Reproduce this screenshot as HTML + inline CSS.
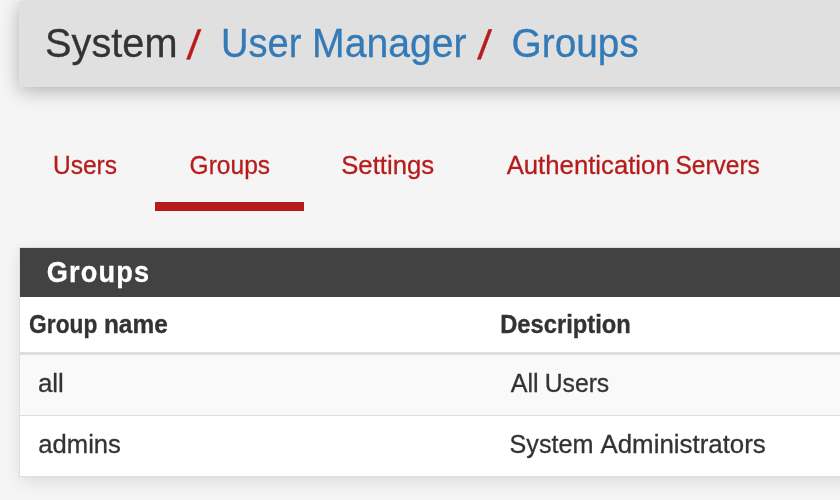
<!DOCTYPE html>
<html lang="en">
<head>
<meta charset="utf-8">
<title>System / User Manager / Groups</title>
<style>
html,body{margin:0;padding:0;}
body{width:840px;height:500px;overflow:hidden;background:#f5f5f5;position:relative;
  font-family:"Liberation Sans",sans-serif;color:#333;}
#root{position:absolute;left:0;top:0;width:840px;height:500px;overflow:hidden;will-change:transform;}
.abs{position:absolute;}
.g{position:absolute;left:0;top:0;margin:0;font-weight:normal;}
.th.g{font-weight:bold;}
.t{position:absolute;white-space:nowrap;line-height:1;margin:0;padding:0;transform-origin:0 84.65%;}
.h1{-webkit-text-stroke:0.3px;}
.tab,.td{-webkit-text-stroke:0.3px;}
a{text-decoration:none;color:inherit;}
/* header */
#hdr{left:19px;top:1px;width:900px;height:86px;background:#e0e0e0;
  box-shadow:0 4px 18px 0 rgba(0,0,0,.28);}
.h1{font-size:40px;font-weight:normal;}
.red{color:#b71c1c;}
.blue{color:#337ab7;}
/* tabs */
.tab{font-size:26px;color:#b71c1c;font-weight:normal;}
#ul{left:155px;top:202px;width:149px;height:9px;background:#b71c1c;}
/* panel */
#panel{left:20px;top:248px;width:840px;height:228px;background:#fff;
  box-shadow:0 0 0 1px #dfdfdf,0 5px 16px 0 rgba(0,0,0,.11);}
#ph{left:0;top:0;width:840px;height:49px;background:#424242;}
#thb{left:0;top:104px;width:840px;height:3px;background:#ddd;}
#r1{left:0;top:107px;width:840px;height:60px;background:#f9f9f9;}
#rb{left:0;top:166.5px;width:840px;height:1.5px;background:#ddd;}
.pt{font-size:28px;font-weight:bold;color:#fff;letter-spacing:1.2px;-webkit-text-stroke:0.3px;}
.th{font-size:26px;font-weight:bold;color:#333;-webkit-text-stroke:0.35px;}
.td{font-size:26px;color:#333;font-weight:normal;}
</style>
</head>
<body>
<div id="root">
<header id="hdr" class="abs"></header>
<h1 class="t h1" id="b1" style="left:45px;top:23px;transform:translate(0.12px,0px) scale(0.9925,1.03);">System</h1>
<span class="t h1 red" id="s1" style="left:189px;top:24px;transform:translate(0.58px,0px) skewX(-5deg) scale(1.0914,1.03);transform-origin:0 0;">/</span>
<a class="g h1 blue"><span class="t" id="b2a" style="left:220px;top:23px;transform:translate(0.96px,0px) scale(0.9533,1.03);">User</span> <span class="t" id="b2b" style="left:312px;top:23px;transform:translate(0.06px,0px) scale(0.9787,1.03);">Manager</span></a>
<span class="t h1 red" id="s2" style="left:480px;top:24px;transform:translate(0.3px,0px) skewX(-5deg) scale(1.0958,1.03);transform-origin:0 0;">/</span>
<a class="t h1 blue" id="b3" style="left:511px;top:23px;transform:translate(0.58px,0px) scale(0.9688,1.03);">Groups</a>

<nav>
<a class="t tab" id="t1" style="left:52px;top:152px;transform:translate(0.95px,0px) scale(0.9435,1);">Users</a>
<a class="t tab" id="t2" style="left:189px;top:152px;transform:translate(0.59px,0px) scale(0.9436,1);">Groups</a>
<a class="t tab" id="t3" style="left:341px;top:152px;transform:translate(0.18px,0px) scale(0.9893,1);">Settings</a>
<a class="g tab"><span class="t" id="t4a" style="left:506px;top:152px;transform:translate(0.66px,0px) scale(0.9893,1);">Authentication</span> <span class="t" id="t4b" style="left:675px;top:152px;transform:translate(0.46px,0px) scale(0.942,1);">Servers</span></a>
<div id="ul" class="abs"></div>
</nav>

<section id="panel" class="abs">
  <div id="ph" class="abs"></div>
  <h2 class="t pt" id="p1" style="left:26px;top:10px;transform:translate(0.87px,0.6px) scale(0.9676,1.06);">Groups</h2>
  <div class="g th"><span class="t" id="h1a" style="left:9px;top:63px;transform:translate(0.11px,0px) scale(0.8744,1);">Group</span> <span class="t" id="h1b" style="left:83px;top:63px;transform:translate(0.9px,0px) scale(0.9397,1);">name</span></div>
  <div class="t th" id="h2" style="left:480px;top:63px;transform:translate(0.21px,0px) scale(0.9128,1);">Description</div>
  <div id="thb" class="abs"></div>
  <div id="r1" class="abs"></div>
  <div id="rb" class="abs"></div>
  <div class="t td" id="c1" style="left:17px;top:122px;transform:translate(0.93px,0px) scale(0.9976,1);">all</div>
  <div class="g td"><span class="t" id="c2a" style="left:490px;top:122px;transform:translate(0.67px,0px) scale(0.9656,1);">All</span> <span class="t" id="c2b" style="left:524px;top:122px;transform:translate(0.66px,0px) scale(0.9509,1);">Users</span></div>
  <div class="t td" id="c3" style="left:18px;top:183px;transform:translate(0.35px,0px) scale(0.985,1);">admins</div>
  <div class="g td"><span class="t" id="c4a" style="left:489px;top:183px;transform:translate(0.56px,0px) scale(0.968,1);">System</span> <span class="t" id="c4b" style="left:580px;top:183px;transform:translate(0.45px,0px) scale(0.9952,1);">Administrators</span></div>
</section>
</div>
</body>
</html>
